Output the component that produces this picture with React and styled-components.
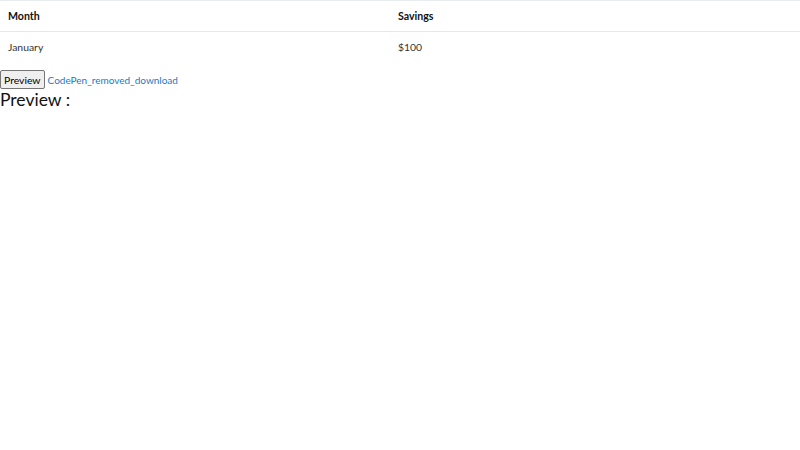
import React from 'react'
import styled, { createGlobalStyle } from 'styled-components'

const Global = createGlobalStyle`
    body {
        margin: 0;
        background: #fff;
        font-family: 'Segoe UI', Lato, sans-serif;
        font-size: 10.4px;
        color: #212529;
    }
`

const Table = styled.table`
    width: 100%;
    border-collapse: collapse;
    margin-bottom: 8px;
    th,
    td {
        text-align: left;
        padding: 7px 7px 7px 8px;
        line-height: 16px;
        border-top: 1px solid #e9ecef;
    }
    th:first-child,
    td:first-child {
        width: 375px;
    }
    th {
        font-weight: bold;
        font-size: 10.6px;
        color: #111;
        border-bottom: 1px solid #e6e8ea;
    }
    td {
        color: #333;
        border-top: none;
    }
`

const Actions = styled.div`
    display: flex;
    align-items: center;
    gap: 3px;
`

const Button = styled.button`
    font-family: inherit;
    font-size: 10.4px;
    height: 19px;
    padding: 0 3px;
    color: #000;
    background: #efefef;
    border: 1px solid #767676;
    border-radius: 2px;
`

const Link = styled.a`
    color: #1a7bc4;
    text-decoration: none;
    font-size: 10px;
`

const Heading = styled.div`
    font-size: 17.5px;
    line-height: 22px;
    color: #111;
`

export default function App() {
    const rows = [{ month: 'January', savings: '$100' }]
    return (
        <>
            <Global />
            <Table>
                <thead>
                    <tr>
                        <th>Month</th>
                        <th>Savings</th>
                    </tr>
                </thead>
                <tbody>
                    {rows.map((r) => (
                        <tr key={r.month}>
                            <td>{r.month}</td>
                            <td>{r.savings}</td>
                        </tr>
                    ))}
                </tbody>
            </Table>
            <Actions>
                <Button>Preview</Button>
                <Link href='#'>CodePen_removed_download</Link>
            </Actions>
            <Heading>Preview :</Heading>
        </>
    )
}
